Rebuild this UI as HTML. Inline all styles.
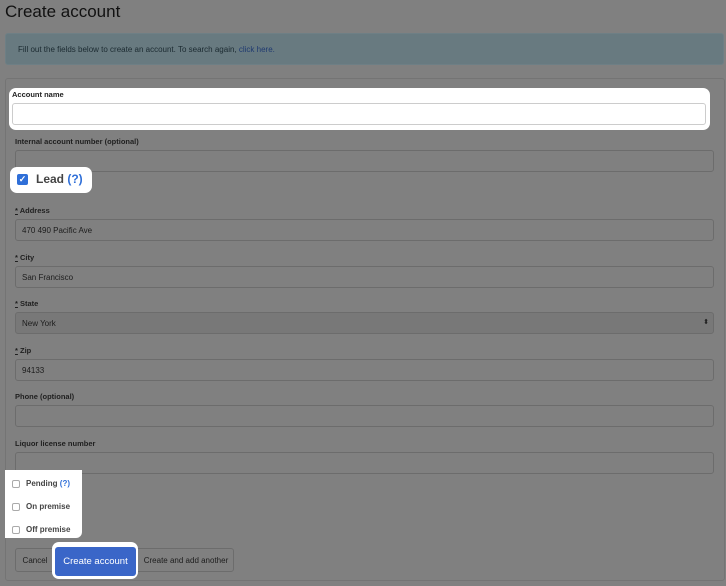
<!DOCTYPE html>
<html><head><style>
*{box-sizing:border-box;margin:0;padding:0}
body{width:726px;height:586px;background:#808080;font-family:"Liberation Sans",sans-serif;position:relative;overflow:hidden;color:#1c1c1c}
.a{position:absolute}
h1{position:absolute;left:5px;top:2px;font-size:17px;font-weight:normal;color:#111}
.alert{left:5px;top:33px;width:719px;height:32px;background:#687a80;border:1px solid #6e7f85;border-radius:3px;font-size:8px;color:#1b2a30;padding:11px 0 0 12px}
.alert span{color:#1f3a70}
.panel{left:5px;top:78px;width:720px;height:503px;border:1px solid #747474;border-radius:3px}
.lbl{position:absolute;left:15px;font-size:7.5px;font-weight:bold;color:#1f1f1f}
.inp{position:absolute;left:15px;width:699px;height:22px;border:1px solid #6c6c6c;border-radius:3px;font-size:8px;padding:6px 0 0 6px;color:#1c1c1c}
.hl{position:absolute;background:#fff;border-radius:7px}
.cb{display:inline-block;width:8px;height:8px;border:1px solid #aaa;border-radius:2px;vertical-align:middle;margin-right:6px}
.btn{position:absolute;top:548px;height:24px;border:1px solid #6c6c6c;border-radius:3px;font-size:8px;padding-top:7px;text-align:center;color:#1c1c1c}
</style></head><body>
<h1>Create account</h1>
<div class="a alert">Fill out the fields below to create an account. To search again, <span>click here.</span></div>
<div class="a panel"></div>
<div class="hl" style="left:9px;top:88px;width:701px;height:42px"></div>
<div class="lbl" style="left:12px;top:90px;color:#222">Account name</div>
<div class="inp" style="left:12px;top:103px;width:694px;height:22px;border-color:#ccc"></div>
<div class="lbl" style="top:137px">Internal account number (optional)</div>
<div class="inp" style="top:150px"></div>
<div class="hl" style="left:10px;top:167px;width:82px;height:26px"></div>
<div class="a" style="left:17px;top:174px;width:11px;height:11px;background:#2f6fd8;border-radius:2px;color:#fff;font-size:9px;line-height:11px;text-align:center;font-weight:bold">✓</div>
<div class="a" style="left:36px;top:172px;font-size:12px;font-weight:bold;color:#444">Lead <span style="color:#2f6fd8">(?)</span></div>
<div class="lbl" style="top:206px"><u>*</u> Address</div>
<div class="inp" style="top:219px">470 490 Pacific Ave</div>
<div class="lbl" style="top:253px"><u>*</u> City</div>
<div class="inp" style="top:266px">San Francisco</div>
<div class="lbl" style="top:299px"><u>*</u> State</div>
<div class="inp" style="top:312px;background:#787878">New York<span style="position:absolute;right:4px;top:5px;font-size:7px">⬍</span></div>
<div class="lbl" style="top:346px"><u>*</u> Zip</div>
<div class="inp" style="top:359px">94133</div>
<div class="lbl" style="top:392px">Phone (optional)</div>
<div class="inp" style="top:405px"></div>
<div class="lbl" style="top:439px">Liquor license number</div>
<div class="inp" style="top:452px"></div>
<div class="hl" style="left:5px;top:470px;width:77px;height:68px;border-radius:0 0 6px 0"></div>
<div class="a" style="left:12px;top:479px;font-size:8px;font-weight:bold;color:#444"><span class="cb"></span>Pending <span style="color:#2f6fd8">(?)</span></div>
<div class="a" style="left:12px;top:502px;font-size:8px;font-weight:bold;color:#444"><span class="cb"></span>On premise</div>
<div class="a" style="left:12px;top:525px;font-size:8px;font-weight:bold;color:#444"><span class="cb"></span>Off premise</div>
<div class="btn" style="left:15px;width:40px">Cancel</div>
<div class="btn" style="left:132px;width:102px;padding-left:6px">Create and add another</div>
<div class="hl" style="left:52px;top:542px;width:86px;height:37px"></div>
<div class="a" style="left:55px;top:547px;width:81px;height:29px;background:#3a66c8;border-radius:3px;color:#fff;font-size:9.5px;text-align:center;padding-top:9px">Create account</div>
</body></html>
